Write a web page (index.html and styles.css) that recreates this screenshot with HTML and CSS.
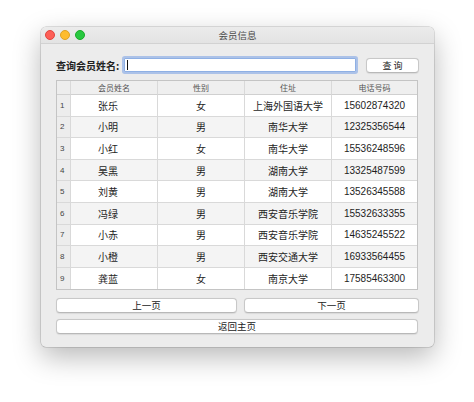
FILE: index.html
```html
<!DOCTYPE html>
<html lang="zh">
<head>
<meta charset="utf-8">
<title>会员信息</title>
<link rel="stylesheet" href="styles.css">
</head>
<body>
<div class="stage">
  <div class="window">
    <div class="titlebar">
      <div class="lights">
        <span class="light red"></span>
        <span class="light yellow"></span>
        <span class="light green"></span>
      </div>
      <div class="title">会员信息</div>
    </div>
    <div class="content">
      <div class="search">
        <label class="search-label">查询会员姓名:</label>
        <div class="input"><span class="caret"></span></div>
        <button class="btn btn-query">查询</button>
      </div>
      <div class="table">
        <div class="row head">
          <div class="c num"></div>
          <div class="c">会员姓名</div>
          <div class="c">性别</div>
          <div class="c">住址</div>
          <div class="c last">电话号码</div>
        </div>
        <div class="row">
          <div class="c num">1</div><div class="c name">张乐</div><div class="c">女</div><div class="c">上海外国语大学</div><div class="c last phone">15602874320</div>
        </div>
        <div class="row alt">
          <div class="c num">2</div><div class="c name">小明</div><div class="c">男</div><div class="c">南华大学</div><div class="c last phone">12325356544</div>
        </div>
        <div class="row">
          <div class="c num">3</div><div class="c name">小红</div><div class="c">女</div><div class="c">南华大学</div><div class="c last phone">15536248596</div>
        </div>
        <div class="row alt">
          <div class="c num">4</div><div class="c name">吴黑</div><div class="c">男</div><div class="c">湖南大学</div><div class="c last phone">13325487599</div>
        </div>
        <div class="row">
          <div class="c num">5</div><div class="c name">刘黄</div><div class="c">男</div><div class="c">湖南大学</div><div class="c last phone">13526345588</div>
        </div>
        <div class="row alt">
          <div class="c num">6</div><div class="c name">冯绿</div><div class="c">男</div><div class="c">西安音乐学院</div><div class="c last phone">15532633355</div>
        </div>
        <div class="row">
          <div class="c num">7</div><div class="c name">小赤</div><div class="c">男</div><div class="c">西安音乐学院</div><div class="c last phone">14635245522</div>
        </div>
        <div class="row alt">
          <div class="c num">8</div><div class="c name">小橙</div><div class="c">男</div><div class="c">西安交通大学</div><div class="c last phone">16933564455</div>
        </div>
        <div class="row lastrow">
          <div class="c num">9</div><div class="c name">龚蓝</div><div class="c">女</div><div class="c">南京大学</div><div class="c last phone">17585463300</div>
        </div>
      </div>
      <div class="pager">
        <button class="btn btn-page">上一页</button>
        <button class="btn btn-page">下一页</button>
      </div>
      <button class="btn btn-home">返回主页</button>
    </div>
  </div>
</div>
</body>
</html>
```

FILE: styles.css
```css
html, body {
  margin: 0;
  padding: 0;
  background: #ffffff;
  width: 474px;
  height: 402px;
  overflow: hidden;
  font-family: "Noto Sans CJK SC", "Liberation Sans", sans-serif;
}

.stage {
  padding: 27px 0 0 41px;
}

.window {
  width: 393px;
  background: #ececec;
  border-radius: 5px;
  box-shadow: 0 0 0 0.5px rgba(0, 0, 0, 0.22), 0 10px 28px rgba(0, 0, 0, 0.28);
  overflow: hidden;
}

.titlebar {
  position: relative;
  height: 16px;
  background: linear-gradient(#ebebeb, #e3e3e3);
  border-bottom: 1px solid #d2d2d2;
  display: flex;
  align-items: center;
  justify-content: center;
}

.lights {
  position: absolute;
  left: 4px;
  top: 3px;
  display: flex;
  gap: 5px;
}

.light {
  width: 10px;
  height: 10px;
  border-radius: 50%;
  box-sizing: border-box;
}
.red { background: #fd5f57; border: 0.5px solid #e0443e; }
.yellow { background: #febc2e; border: 0.5px solid #dea123; }
.green { background: #28c840; border: 0.5px solid #1aab29; }

.title {
  font-size: 9.5px;
  color: #4a4a4a;
  line-height: 16px;
}

.content {
  padding: 12px 15px 13px 15px;
}

.search {
  display: flex;
  align-items: center;
  height: 18px;
}

.search-label {
  width: 66px;
  font-size: 10px;
  font-weight: bold;
  color: #222;
  white-space: nowrap;
}

.input {
  margin-left: 2px;
  width: 232px;
  height: 14px;
  box-sizing: border-box;
  background: #fff;
  border: 1px solid #8fb0e4;
  box-shadow: 0 0 0 2px rgba(120, 160, 230, 0.55);
  border-radius: 1px;
  display: flex;
  align-items: center;
  padding-left: 2px;
}

.caret {
  width: 1px;
  height: 10px;
  background: #111;
}

.btn {
  font-family: "Noto Sans CJK SC", "Liberation Sans", sans-serif;
  background: #ffffff;
  border: 1px solid #c8c8c8;
  border-bottom-color: #b8b8b8;
  border-radius: 4px;
  box-shadow: 0 0.5px 1px rgba(0, 0, 0, 0.08);
  color: #222;
  padding: 0;
  margin: 0;
  box-sizing: border-box;
  line-height: 1;
}

.btn-query {
  margin-left: auto;
  width: 53px;
  height: 15px;
  font-size: 9px;
  letter-spacing: 2px;
  text-indent: 2px;
}

.table {
  margin-top: 6px;
  width: 362px;
  box-sizing: border-box;
  border: 1px solid #c4c4c4;
  display: grid;
  grid-template-columns: 14px 87px 87px 87px 1fr;
  grid-template-rows: 14px repeat(9, 21.6px);
  background: #fff;
}

.row {
  display: contents;
}

.c {
  box-sizing: border-box;
  border-right: 1px solid #d9d9d9;
  border-bottom: 1px solid #d9d9d9;
  display: flex;
  align-items: center;
  justify-content: center;
  font-size: 10px;
  color: #1e1e1e;
  white-space: nowrap;
  background: #ffffff;
}

.c.last {
  border-right: none;
}

.lastrow .c {
  border-bottom: none;
}

.alt .c {
  background: #f4f4f4;
}

.head .c {
  background: #efefef;
  font-size: 8px;
  color: #555;
  border-bottom-color: #d0d0d0;
}

.c.num,
.alt .c.num,
.head .c.num {
  background: #ededed;
  justify-content: flex-start;
  padding-left: 3px;
  font-family: "Liberation Sans", sans-serif;
  font-size: 8px;
  color: #444;
}

.c.name {
  justify-content: flex-start;
  padding-left: 27px;
}

.c.phone {
  font-family: "Liberation Sans", sans-serif;
  font-size: 10px;
}

.pager {
  margin-top: 8px;
  display: flex;
  gap: 7px;
}

.btn-page {
  height: 15px;
  font-size: 9.5px;
}
.btn-page:first-child { width: 181px; }
.btn-page:last-child { flex: 1; }

.btn-home {
  display: block;
  margin-top: 6px;
  width: 362px;
  height: 15px;
  font-size: 9.5px;
}
```
